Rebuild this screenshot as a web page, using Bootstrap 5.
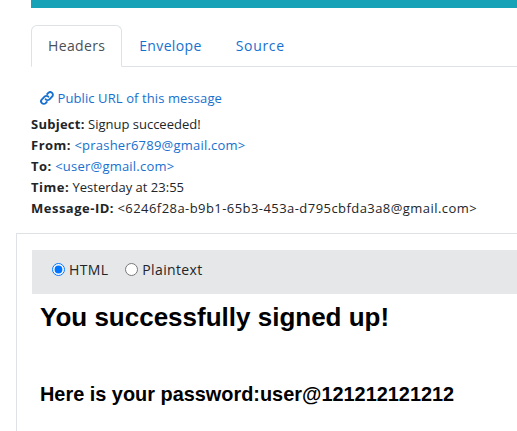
<!DOCTYPE html>
<html lang="en">
<head>
<meta charset="utf-8">
<title>Message</title>
<link href="https://cdn.jsdelivr.net/npm/bootstrap@5.3.0/dist/css/bootstrap.min.css" rel="stylesheet">
<style>
html, body { overflow: hidden; height: 431px; }
body { font-family: "Open Sans", sans-serif; font-size: 13px; color: #212529; background: #fff; }
.top-bar { height: 8px; background: #17a2b8; margin-left: 31px; }
.msg-head { margin: 17px 0 0 31px; }
.msg-tabs { font-size: 14px; }
.msg-tabs .nav-link { padding: 9px 16px 11px; height: 42px; line-height: 21px; color: #1670d0; border-color: transparent; letter-spacing: .35px; }
.msg-tabs .nav-link.active { color: #495057; border-color: #dee2e6 #dee2e6 #fff; }
.msg-tabs .tab-wide { letter-spacing: .7px; }
.url-line { margin: 21px 0 0 9px; line-height: 20px; letter-spacing: .1px; }
.url-line a { text-decoration: none; color: #1670d0; }
.url-line svg { width: 14px; height: 14px; vertical-align: -2px; }
.meta-list { margin-top: 6px; }
.meta-list div { line-height: 21px; white-space: nowrap; }
.meta-list b { letter-spacing: .5px; }
.meta-list .lbl-subject { letter-spacing: .25px; }
.meta-list a { text-decoration: none; color: #1670d0; letter-spacing: .22px; }
.meta-list .msg-id { letter-spacing: .44px; }
.mail-pane { margin: 14px 0 0 16px; padding: 16px 0 0 15px; border-top: 1px solid #dee2e6; border-left: 1px solid #dee2e6; height: 198px; }
.view-bar { height: 44px; background: #e6e7e9; padding: 0 0 6px 20px; font-size: 14px; letter-spacing: .35px; }
.view-bar .form-check { margin: 0 17px 0 0; padding-left: 17px; min-height: 0; }
.view-bar .form-check-input { appearance: auto; -webkit-appearance: auto; background: none; border: 0; width: 13px; height: 13px; margin: 4px 0 0 -17px; }
.view-bar .form-check-input:focus { box-shadow: none; }
.mail-body { padding-left: 8px; font-family: "Liberation Sans", Arial, sans-serif; color: #000; white-space: nowrap; }
.mail-body h1 { font-size: 26px; font-weight: 700; line-height: 30px; margin: 8px 0 0; }
.mail-body h3 { font-size: 19.9px; font-weight: 700; line-height: 22px; margin: 51px 0 0; }
</style>
</head>
<body>
<div class="top-bar"></div>
<div class="msg-head">
  <ul class="nav nav-tabs msg-tabs">
    <li class="nav-item"><a class="nav-link active" href="#">Headers</a></li>
    <li class="nav-item"><a class="nav-link" href="#">Envelope</a></li>
    <li class="nav-item"><a class="nav-link tab-wide" href="#">Source</a></li>
  </ul>
  <div class="url-line">
    <a href="#"><svg viewBox="0 0 16 16" fill="none" stroke="currentColor" stroke-width="2.2" stroke-linecap="round"><path d="M6.5 9.5a3 3 0 0 0 4.3 0l3-3a3 3 0 0 0-4.3-4.3L8.3 3.4"/><path d="M9.5 6.5a3 3 0 0 0-4.3 0l-3 3a3 3 0 0 0 4.3 4.3l1.2-1.2"/></svg> Public URL of this message</a>
  </div>
  <div class="meta-list">
    <div><b class="lbl-subject">Subject:</b> Signup succeeded!</div>
    <div><b>From:</b> <a href="#">&lt;prasher6789@gmail.com&gt;</a></div>
    <div><b>To:</b> <a href="#">&lt;user@gmail.com&gt;</a></div>
    <div><b>Time:</b> Yesterday at 23:55</div>
    <div><b>Message-ID:</b> <span class="msg-id">&lt;6246f28a-b9b1-65b3-453a-d795cbfda3a8@gmail.com&gt;</span></div>
  </div>
</div>
<div class="mail-pane">
  <div class="view-bar d-flex align-items-center">
    <div class="form-check"><input class="form-check-input" type="radio" name="view" id="v1" checked><label class="form-check-label" for="v1">HTML</label></div>
    <div class="form-check"><input class="form-check-input" type="radio" name="view" id="v2"><label class="form-check-label" for="v2">Plaintext</label></div>
  </div>
  <div class="mail-body">
    <h1>You successfully signed up!</h1>
    <h3>Here is your password:user@121212121212</h3>
  </div>
</div>
<script src="https://cdn.jsdelivr.net/npm/bootstrap@5.3.0/dist/js/bootstrap.bundle.min.js"></script>
</body>
</html>
